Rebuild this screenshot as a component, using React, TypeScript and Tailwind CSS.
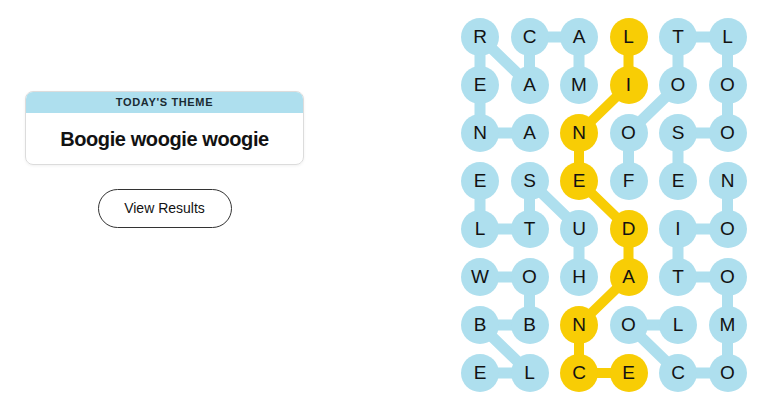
import React from "react";

const ROWS = ["RCALTL", "EAMIOO", "NANOSO", "ESEFEN", "LTUDIO", "WOHATO", "BBNOLM", "ELCECO"];

// spangram cells [row, col]
const FOUND = [
  [0, 3], [1, 3], [2, 2], [3, 2], [4, 3], [5, 3], [6, 2], [7, 2], [7, 3],
];

// blue word paths
const WORDS: number[][][] = [
  [[1, 2], [0, 2], [0, 1], [1, 1], [0, 0], [1, 0], [2, 0], [2, 1]],
  [[3, 3], [2, 3], [1, 4], [0, 4], [0, 5], [1, 5], [2, 5], [2, 4], [3, 4]],
  [[5, 2], [4, 2], [3, 1], [4, 1], [4, 0], [3, 0]],
  [[5, 0], [5, 1], [6, 1], [6, 0], [7, 1], [7, 0]],
  [[6, 4], [6, 3], [7, 4], [7, 5], [6, 5], [5, 5], [5, 4], [4, 4], [4, 5], [3, 5]],
];

const CW = 49.5;
const RH = 48;
const R = 19;

const cx = (c: number) => R + c * CW;
const cy = (r: number) => R + r * RH;

function Path({ cells, color, width }: { cells: number[][]; color: string; width: number }) {
  return (
    <polyline
      points={cells.map(([r, c]) => `${cx(c)},${cy(r)}`).join(" ")}
      fill="none"
      stroke={color}
      strokeWidth={width}
      strokeLinejoin="round"
      strokeLinecap="round"
    />
  );
}

function Board() {
  const isFound = (r: number, c: number) => FOUND.some(([a, b]) => a === r && b === c);
  return (
    <div className="relative">
      <svg className="absolute left-0 top-0" width={285.5} height={374}>
        {WORDS.map((w, i) => (
          <Path key={i} cells={w} color="#aedfee" width={11} />
        ))}
        <Path cells={FOUND} color="#f8cd05" width={10} />
      </svg>
      <div className="relative grid grid-cols-[repeat(6,38px)] gap-x-[11.5px] gap-y-[10px]">
        {ROWS.map((row, r) =>
          row.split("").map((ch, c) => (
            <div
              key={`${r}-${c}`}
              className={`w-[38px] h-[38px] rounded-full flex items-center justify-center text-[19px] text-[#121212] ${
                isFound(r, c) ? "bg-[#f8cd05]" : "bg-[#aedfee]"
              }`}
            >
              {ch}
            </div>
          ))
        )}
      </div>
    </div>
  );
}

export default function App() {
  return (
    <div className="w-[768px] h-[409px] bg-white flex font-['Liberation_Sans',Arial,sans-serif] text-[#121212]">
      <div className="ml-[25px] w-[279px] pt-[91px] flex flex-col items-center">
        <div className="w-full rounded-lg border border-[#dcdcdc] overflow-hidden shadow-[0_1px_3px_rgba(0,0,0,0.06)]">
          <div className="bg-[#aedfee] h-[21px] flex items-center justify-center text-[11px] font-bold tracking-[0.06em] text-[#1a2b33]">
            TODAY'S THEME
          </div>
          <div className="h-[51px] flex items-center justify-center text-[20px] font-bold tracking-[-0.02em]">
            Boogie woogie woogie
          </div>
        </div>
        <button className="mt-[24px] w-[134px] h-[39px] rounded-full border border-[#333] text-[14px] text-[#121212] bg-white">
          View Results
        </button>
      </div>
      <div className="ml-[157px] pt-[18px]">
        <Board />
      </div>
    </div>
  );
}
